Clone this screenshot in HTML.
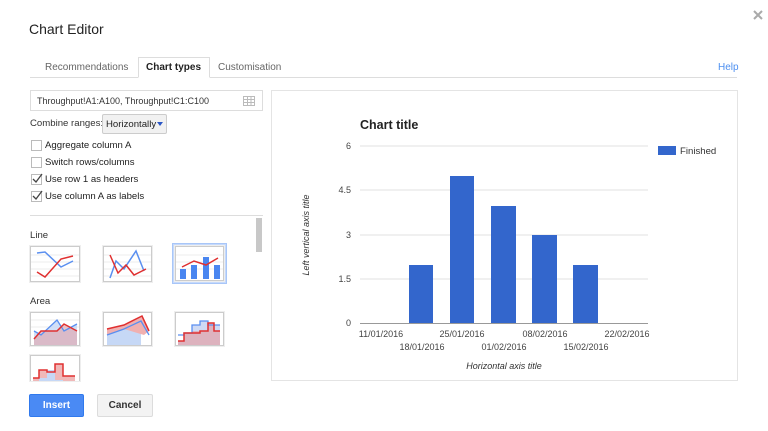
<!DOCTYPE html>
<html><head><style>
*{margin:0;padding:0;box-sizing:border-box}
body{width:768px;height:431px;background:#fff;font-family:"Liberation Sans",Arial,sans-serif;position:relative;overflow:hidden;color:#222}
.a{position:absolute}
.t{font-size:10.5px;color:#222}
.cl{position:absolute;left:45px;font-size:9.6px;color:#222}
.cb{position:absolute;left:31px;width:11px;height:11px;border:1px solid #bbb;background:#fff}
.ck{position:absolute;left:31px}
.thumb{position:absolute;border:1px solid #ccc;background:#fff;box-shadow:0 0 0 1px #eee}
</style></head><body>
<div class="a" style="left:29px;top:21px;font-size:14px;color:#222">Chart Editor</div>
<svg class="a" style="left:753px;top:10px" width="10" height="10"><path d="M1 1L9 9M9 1L1 9" stroke="#aaa" stroke-width="2"/></svg>
<div class="a" style="left:30px;top:77px;width:707px;height:1px;background:#ddd"></div>
<div class="a t" style="left:45px;top:62px;color:#666;font-size:10px">Recommendations</div>
<div class="a" style="left:138px;top:57px;width:72px;height:21px;border:1px solid #ddd;border-bottom:1px solid #fff;background:#fff"></div>
<div class="a t" style="left:146px;top:62px;font-weight:bold;color:#222;font-size:10px">Chart types</div>
<div class="a t" style="left:218px;top:62px;color:#666;font-size:10px">Customisation</div>
<div class="a t" style="left:718px;top:62px;color:#4d8ff0;font-size:10px">Help</div>

<div class="a" style="left:30px;top:90px;width:233px;height:21px;border:1px solid #ddd"></div>
<div class="a" style="left:37px;top:96px;font-size:9px;color:#333">Throughput!A1:A100, Throughput!C1:C100</div>
<svg class="a" style="left:243px;top:96px" width="12" height="10"><g stroke="#bbb" stroke-width="1" fill="none"><rect x=".5" y=".5" width="11" height="9"/><path d="M4.5 0v10M8 0v10M0 3.5h12M0 6.5h12"/></g></svg>
<div class="a" style="left:30px;top:118px;font-size:9.6px;color:#333">Combine ranges:</div>
<div class="a" style="left:102px;top:114px;width:65px;height:20px;border:1px solid #ccc;background:#f1f1f1;border-radius:2px"></div>
<div class="a" style="left:106px;top:119px;font-size:9.6px;color:#222">Horizontally</div>
<div class="a" style="left:157px;top:122px;border-left:3px solid transparent;border-right:3px solid transparent;border-top:4px solid #2a56c6"></div>

<div class="cb" style="top:140px"></div><div class="cl" style="top:140px">Aggregate column A</div>
<div class="cb" style="top:157px"></div><div class="cl" style="top:157px">Switch rows/columns</div>
<div class="cb" style="top:174px"></div><svg class="ck" style="top:172px" width="13" height="13"><path d="M2 7L5 10L11 2" stroke="#444" stroke-width="1.3" fill="none"/></svg><div class="cl" style="top:174px">Use row 1 as headers</div>
<div class="cb" style="top:191px"></div><svg class="ck" style="top:189px" width="13" height="13"><path d="M2 7L5 10L11 2" stroke="#444" stroke-width="1.3" fill="none"/></svg><div class="cl" style="top:191px">Use column A as labels</div>

<div class="a" style="left:30px;top:215px;width:233px;height:1px;background:#ddd"></div>
<div class="a" style="left:256px;top:218px;width:6px;height:34px;background:#c8c8c8"></div>
<div class="a" style="left:30px;top:230px;font-size:9.6px;color:#333">Line</div>
<div class="a" style="left:30px;top:296px;font-size:9.6px;color:#333">Area</div>

<div class="thumb" style="left:30px;top:246px;width:50px;height:36px"><svg width="48" height="34"><g stroke="#eee"><path d="M0 8h48M0 15h48M0 22h48M0 29h48"/></g><path d="M6 6L14 5L30 20L42 14" stroke="#5a8ff0" stroke-width="1.5" fill="none"/><path d="M6 25L14 30L30 12L42 9" stroke="#e03030" stroke-width="1.5" fill="none"/></svg></div>
<div class="thumb" style="left:103px;top:246px;width:49px;height:36px"><svg width="47" height="34"><g stroke="#eee"><path d="M0 8h48M0 15h48M0 22h48M0 29h48"/></g><path d="M6 31L12 14L20 22L32 4L40 24" stroke="#5a8ff0" stroke-width="1.5" fill="none"/><path d="M6 8L14 26L22 18L30 28L42 22" stroke="#e03030" stroke-width="1.5" fill="none"/></svg></div>
<div class="a" style="left:172px;top:243px;width:55px;height:41px;background:#c6dafc;border:1px solid #a8c6f8"></div>
<div class="thumb" style="left:175px;top:246px;width:49px;height:35px"><svg width="47" height="33"><g stroke="#eee"><path d="M0 8h48M0 15h48M0 22h48"/></g><rect x="4" y="22" width="6" height="10" fill="#4a86f0"/><rect x="15" y="18" width="6" height="14" fill="#4a86f0"/><rect x="27" y="10" width="6" height="22" fill="#4a86f0"/><rect x="38" y="18" width="6" height="14" fill="#4a86f0"/><path d="M6 20L18 14L30 18L42 11" stroke="#e03030" stroke-width="1.5" fill="none"/></svg></div>

<div class="thumb" style="left:30px;top:312px;width:50px;height:34px"><svg width="48" height="32"><g stroke="#eee"><path d="M0 7h48M0 14h48"/></g><path d="M3 18L10 22L26 7L33 18L46 11V32H3Z" fill="#c6d8f6" opacity=".8"/><path d="M3 26L10 18H26L33 11L46 18V32H3Z" fill="#e0a0a8" opacity=".6"/><path d="M3 18L10 22L26 7L33 18L46 11" stroke="#5a8ff0" stroke-width="1.3" fill="none"/><path d="M3 26L10 18H26L33 11L46 18" stroke="#e03030" stroke-width="1.5" fill="none"/></svg></div>
<div class="thumb" style="left:103px;top:312px;width:49px;height:34px"><svg width="47" height="32"><path d="M3 22L20 16L37 6V32H3Z" fill="#c6d8f6"/><path d="M3 16L20 12L38 3L45 18L40 22L20 16L3 22Z" fill="#f0b0b0"/><path d="M3 16L20 12L38 3L45 18" stroke="#e03030" stroke-width="1.5" fill="none"/><path d="M3 22L20 16L37 8L45 22" stroke="#5a8ff0" stroke-width="1.3" fill="none"/></svg></div>
<div class="thumb" style="left:175px;top:312px;width:49px;height:34px"><svg width="47" height="32"><path d="M2 28H8V20H16V12H24V8H32V12H44V32H2Z" fill="#cfdaf4"/><path d="M2 28H8V20H16V18H24V18H32V10H38V18H44V32H2Z" fill="#e0a8b0" opacity=".8"/><path d="M2 22H8V20H16V12H24V8H32V12H44" stroke="#5a8ff0" stroke-width="1.3" fill="none"/><path d="M2 28H8V20H24V18H32V10H38V18H44" stroke="#e03030" stroke-width="1.5" fill="none"/></svg></div>
<div class="thumb" style="left:30px;top:355px;width:50px;height:26px;border-bottom:none;overflow:hidden"><svg width="48" height="26"><path d="M2 22H8V14H16V16H24V8H32V20H44V26H2Z" fill="#f0b8b8"/><path d="M8 22H16V14H24V24H32V26H8Z" fill="#c6d8f6"/><path d="M2 22H8V14H16V16H24V8H32V20H44" stroke="#e03030" stroke-width="1.5" fill="none"/></svg></div>

<div class="a" style="left:29px;top:394px;width:55px;height:23px;background:#4a8af4;border:1px solid #3079ed;border-radius:2px;color:#fff;font-size:10px;font-weight:bold;text-align:center;line-height:21px">Insert</div>
<div class="a" style="left:97px;top:394px;width:56px;height:23px;background:#f3f3f3;border:1px solid #dcdcdc;border-radius:2px;color:#333;font-size:10px;font-weight:bold;text-align:center;line-height:21px">Cancel</div>

<div class="a" style="left:271px;top:90px;width:467px;height:291px;border:1px solid #e4e4e4"></div>
<svg class="a" style="left:0;top:0" width="768" height="431">
<text x="360" y="129" font-size="12.5" font-weight="bold" fill="#222" font-family="Liberation Sans">Chart title</text>
<g stroke="#e0e0e0"><path d="M360 146h288M360 190h288M360 235h288M360 279h288"/></g>
<path d="M360 323.5h288" stroke="#999"/>
<g font-size="9" fill="#444" font-family="Liberation Sans" text-anchor="end"><text x="351" y="149">6</text><text x="351" y="193">4.5</text><text x="351" y="238">3</text><text x="351" y="282">1.5</text><text x="351" y="326">0</text></g>
<g fill="#3366cc"><rect x="409" y="265" width="24" height="58"/><rect x="450" y="176" width="24" height="147"/><rect x="491" y="206" width="25" height="117"/><rect x="532" y="235" width="25" height="88"/><rect x="573" y="265" width="25" height="58"/></g>
<g font-size="9" fill="#444" font-family="Liberation Sans" text-anchor="middle"><text x="381" y="337">11/01/2016</text><text x="462" y="337">25/01/2016</text><text x="545" y="337">08/02/2016</text><text x="627" y="337">22/02/2016</text><text x="422" y="350">18/01/2016</text><text x="504" y="350">01/02/2016</text><text x="586" y="350">15/02/2016</text></g>
<text x="504" y="369" font-size="9" font-style="italic" fill="#333" text-anchor="middle" font-family="Liberation Sans">Horizontal axis title</text>
<text transform="translate(309 235) rotate(-90)" font-size="9" font-style="italic" fill="#333" text-anchor="middle" font-family="Liberation Sans">Left vertical axis title</text>
<rect x="658" y="146" width="18" height="9" fill="#3366cc"/>
<text x="680" y="154" font-size="9.6" fill="#333" font-family="Liberation Sans">Finished</text>
</svg>
</body></html>
